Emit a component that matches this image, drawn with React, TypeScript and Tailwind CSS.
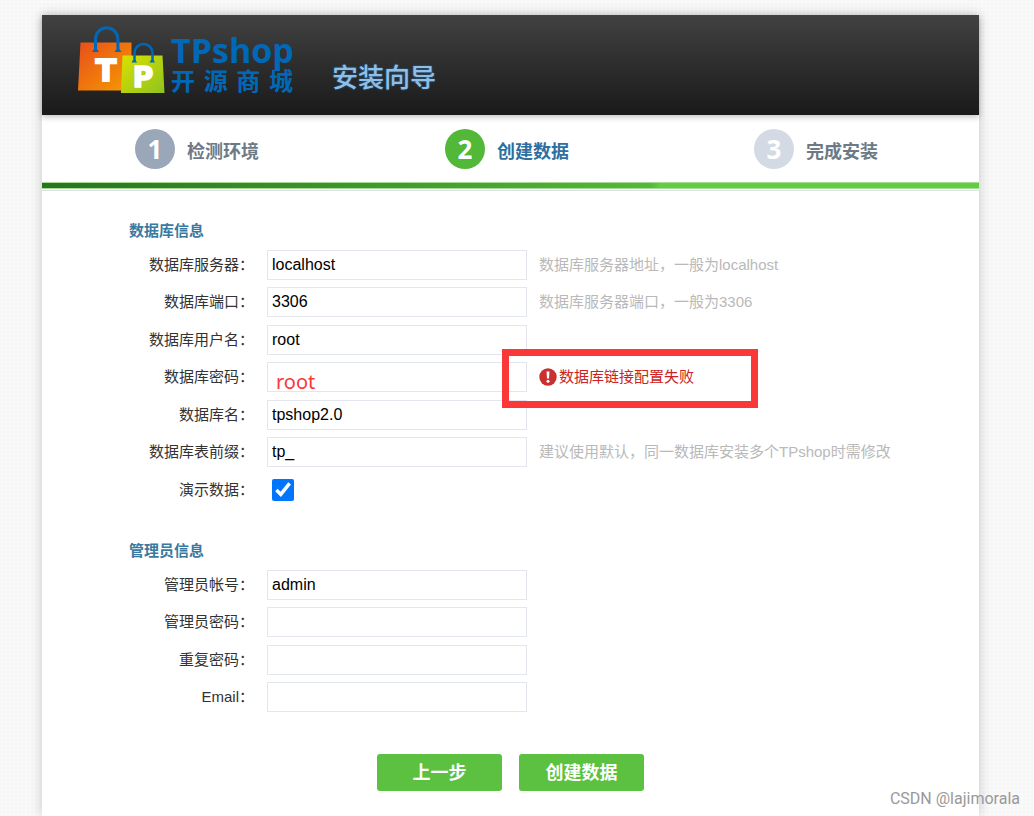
import React from 'react';

type Field = {
  id: string;
  label: string;
  value?: string;
  type?: string;
  hint?: string;
  invalid?: boolean;
};

const databaseFields: Field[] = [
  { id: 'dbhost', label: '数据库服务器：', value: 'localhost', hint: '数据库服务器地址，一般为localhost' },
  { id: 'dbport', label: '数据库端口：', value: '3306', hint: '数据库服务器端口，一般为3306' },
  { id: 'dbuser', label: '数据库用户名：', value: 'root' },
  { id: 'dbpw', label: '数据库密码：', value: 'root', invalid: true },
  { id: 'dbname', label: '数据库名：', value: 'tpshop2.0' },
  { id: 'dbprefix', label: '数据库表前缀：', value: 'tp_', hint: '建议使用默认，同一数据库安装多个TPshop时需修改' },
];

const adminFields: Field[] = [
  { id: 'manager', label: '管理员帐号：', value: 'admin' },
  { id: 'manager_pwd', label: '管理员密码：', type: 'password' },
  { id: 'manager_ckpwd', label: '重复密码：', type: 'password' },
  { id: 'manager_email', label: 'Email：', type: 'email' },
];

function Bags() {
  return (
    <svg className="h-[70px] w-[88px] shrink-0" viewBox="0 0 88 70" aria-hidden="true">
      <defs>
        <linearGradient id="orange" x1="0" y1="0" x2="1" y2="1">
          <stop offset="0" stopColor="#e94e1b" />
          <stop offset="1" stopColor="#f59c00" />
        </linearGradient>
        <linearGradient id="lime" x1="0" y1="0" x2="1" y2="1">
          <stop offset="0" stopColor="#dbe000" />
          <stop offset="1" stopColor="#8fc31f" />
        </linearGradient>
      </defs>
      <path d="M3.500 17.500H54.500V65.500H1Z" fill="url(#orange)" />
      <path d="M18.500 26V14a11.200 11.200 0 0 1 22.400 0V26" fill="none" stroke="#0068b7" strokeWidth="3" />
      <path d="M15 27l2-3h3l2 3zM37.500 27l2-3h3l2 3z" fill="#0068b7" />
      <path d="M45.500 30.500H85.500L87.500 68H44Z" fill="url(#lime)" />
      <path d="M57.500 37V28a9 9 0 0 1 18 0V37" fill="none" stroke="#0068b7" strokeWidth="2.500" />
      <path d="M54.500 37.500l1.500-2.500h2.500l1.500 2.500zM72.500 37.500l1.500-2.500h2.500l1.500 2.500z" fill="#0068b7" />
      <text x="29" y="56" textAnchor="middle" fill="#fff" stroke="#fff" strokeWidth="2" className="font-['DejaVu_Sans'] text-[30px] font-bold">T</text>
      <text x="66" y="62" textAnchor="middle" fill="#fff" stroke="#fff" strokeWidth="1.500" className="font-['DejaVu_Sans'] text-[28px] font-bold">P</text>
    </svg>
  );
}

function Row({ field, children }: { field: Field; children?: React.ReactNode }) {
  return (
    <div className="flex h-[30px] items-center odd:mb-[7px] even:mb-2">
      <label htmlFor={field.id} className="w-[125px] shrink-0 text-right text-[15px] leading-5 text-[#333]">
        {field.label}
      </label>
      <input
        id={field.id}
        type={field.type ?? 'text'}
        defaultValue={field.value}
        className={`ml-[13px] h-[30px] w-[260px] border border-[#e3e6ee] bg-white ${
          field.invalid
            ? "px-2 pt-2 font-['Noto_Sans'] text-xl leading-5 text-[#fb3838]"
            : 'px-1 text-base text-black'
        }`}
      />
      {field.hint && <span className="ml-3 text-[15px] leading-5 whitespace-nowrap text-[#b9b9b9]">{field.hint}</span>}
      {children}
    </div>
  );
}

function PasswordError() {
  return (
    <span className="relative ml-3 flex items-center">
      <svg className="size-[18px]" viewBox="0 0 18 18" aria-hidden="true">
        <circle cx="9" cy="9" r="8.700" fill="#c9302f" />
        <path d="M7.500 3.500h3l-.5 7H8z" fill="#fff" />
        <circle cx="9" cy="13.300" r="1.500" fill="#fff" />
      </svg>
      <span className="ml-0.5 text-[15px] leading-5 whitespace-nowrap text-[#cc2222]">数据库链接配置失败</span>
      <span className="absolute -top-[18px] -left-[37px] h-[59px] w-[256px] border-[7px] border-[#fb3838]" />
    </span>
  );
}

const steps = [
  { n: 1, label: '检测环境', circle: 'bg-[#9aa7b9]', text: 'text-[#6c7a86]' },
  { n: 2, label: '创建数据', circle: 'bg-[#52b837]', text: 'text-[#2f6f9f]' },
  { n: 3, label: '完成安装', circle: 'bg-[#d3dae4]', text: 'text-[#6c7a86]' },
];

export default function App() {
  return (
    <div className="relative h-screen overflow-hidden bg-[#f7f7f7] bg-[radial-gradient(circle,#fcfcfc_1px,transparent_1px)] bg-[size:4px_4px] pt-[15px] pr-[55px] pl-[42px] font-['Liberation_Sans','Noto_Sans_CJK_SC',sans-serif]">
      <main className="min-h-full bg-white shadow-[0_0_12px_rgba(0,0,0,0.2)]">
        <header className="relative flex h-[100px] bg-linear-to-b from-[#424242] to-[#1a1a1a] pt-[10px] pl-[35px] shadow-[0_2px_6px_rgba(0,0,0,0.25)]">
          <Bags />
          <div className="ml-[6px] w-[122px] pt-[7px] text-[#0068b7]">
            <div className="font-['Open_Sans'] text-[34px] leading-9 font-bold">TPshop</div>
            <div className="flex justify-between text-[24px] leading-[28px] font-bold">
              <span>开</span>
              <span>源</span>
              <span>商</span>
              <span>城</span>
            </div>
          </div>
          <h1 className="ml-[39px] pt-[35px] text-[26px] leading-9 font-medium text-[#8fbfe6] [text-shadow:0_0_2px_#2a7ab8]">安装向导</h1>
        </header>

        <ol className="grid h-[67px] grid-cols-[310px_309px_auto] pl-[93px]">
          {steps.map((step) => (
            <li key={step.n} className="flex items-start pt-[14px]">
              <span className={`flex size-10 items-center justify-center rounded-full font-['Open_Sans'] text-[26px] leading-10 font-bold text-white ${step.circle}`}>
                {step.n}
              </span>
              <span className={`ml-3 pt-[9px] text-lg leading-7 font-bold ${step.text}`}>{step.label}</span>
            </li>
          ))}
        </ol>
        <div className="border-b border-[#dde1e8] pb-[1px]">
          <div className="h-[7px] border-y border-[#a5dc93] bg-linear-to-r from-[#2a7320] via-[#55b83a] via-65% to-[#5fcf41] to-66%" />
        </div>

        <form className="pl-[87px]" onSubmit={(e) => e.preventDefault()}>
          <section className="pt-[29px]">
            <h2 className="mb-2 text-[15px] leading-[22px] font-bold text-[#3a7a9f]">数据库信息</h2>
            <div>
              {databaseFields.map((field) => (
                <Row key={field.id} field={field}>
                  {field.invalid && <PasswordError />}
                </Row>
              ))}
              <div className="flex h-[30px] items-center">
                <label htmlFor="demo" className="w-[125px] text-right text-[15px] leading-5 text-[#333]">
                  演示数据：
                </label>
                <input id="demo" type="checkbox" defaultChecked className="ml-[18px] size-[22px] accent-[#0075ff]" />
              </div>
            </div>
          </section>

          <section className="pt-[35px]">
            <h2 className="mb-2 text-[15px] leading-[22px] font-bold text-[#3a7a9f]">管理员信息</h2>
            <div>
              {adminFields.map((field) => (
                <Row key={field.id} field={field} />
              ))}
            </div>
          </section>
        </form>

        <div className="mt-[42px] flex justify-center gap-[17px]">
          <button type="button" className="h-[37px] w-[125px] rounded-[3px] bg-[#5cc140] text-lg font-bold text-white">
            上一步
          </button>
          <button type="button" className="h-[37px] w-[125px] rounded-[3px] bg-[#5cc140] text-lg font-bold text-white">
            创建数据
          </button>
        </div>
      </main>
      <div className="absolute right-[14px] bottom-[7px] font-['Roboto'] text-base leading-5 text-[#999]">CSDN @lajimorala</div>
    </div>
  );
}
